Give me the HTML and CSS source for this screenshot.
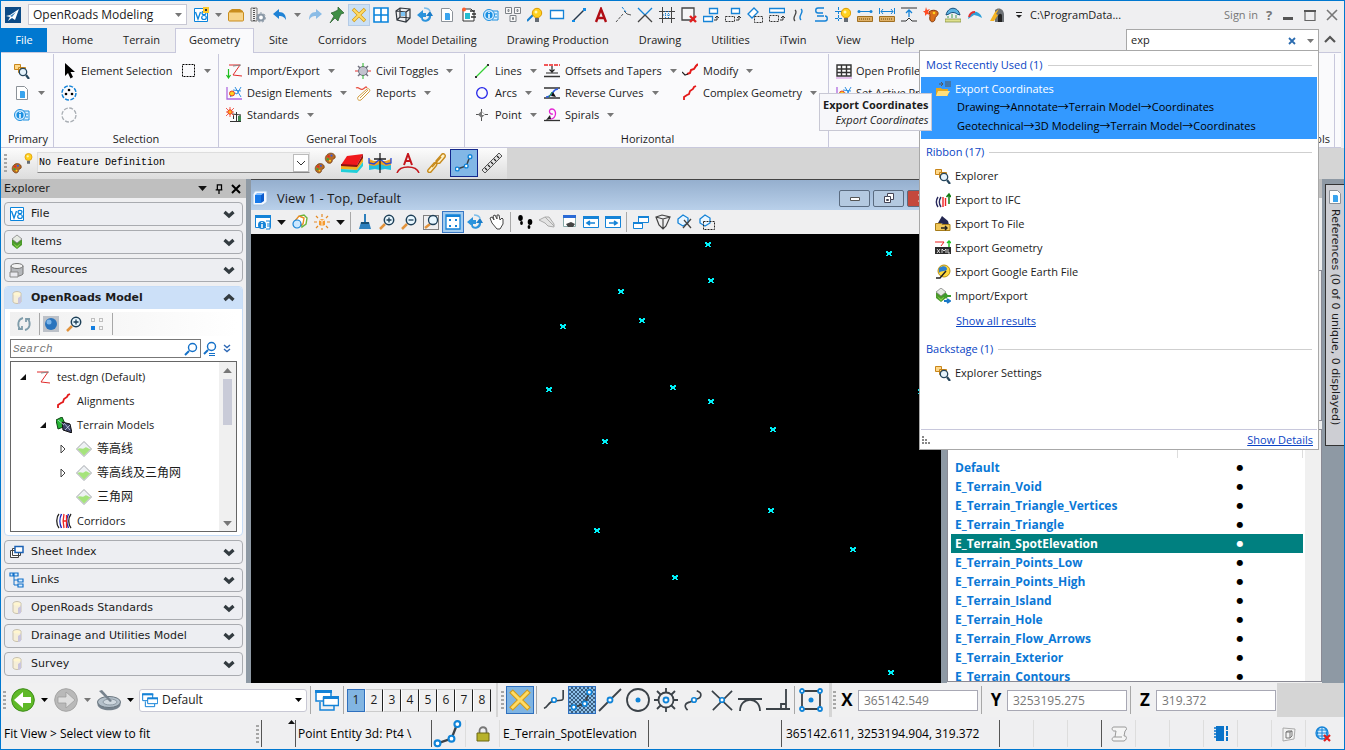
FILE: index.html
```html
<!DOCTYPE html>
<html lang="en">
  <head>
    <meta charset="UTF-8" />
    <meta name="viewport" content="width=device-width, initial-scale=1.0" />
    <title>OpenRoads Modeling</title>
    <link rel="stylesheet" href="styles.css">
  </head>
  <body>
    <!-- icon sprite -->
    <svg class="sprite" aria-hidden="true">
      <symbol id="caret" viewBox="0 0 7 4"><path d="M0 0h7L3.5 4z" fill="currentColor"/></symbol>
      <symbol id="logo" viewBox="0 0 16 16"><rect width="16" height="16" fill="#0c4a86"/><path d="M1 9l4-1 9-6-4 11-3-2-4 3 2-4z" fill="#fff"/><path d="M5 9l6-4-4 5z" fill="#3d83bd"/></symbol>
      <symbol id="v8" viewBox="0 0 16 16"><path d="M1.5 1.5h13v13h-13z" fill="#fff" stroke="#0a84dc"/><path d="M2.5 5L5 12l2.5-7" fill="none" stroke="#0a84dc" stroke-width="1.3"/><ellipse cx="11" cy="6" rx="2" ry="1.7" fill="none" stroke="#0a84dc" stroke-width="1.2"/><ellipse cx="11" cy="10.5" rx="2.3" ry="2" fill="none" stroke="#0a84dc" stroke-width="1.2"/></symbol>
      <symbol id="v8-star" viewBox="0 0 16 16"><use href="#v8"/><path d="M10 0h6v6h-6z" fill="#ffc928"/><path d="M12 2h2v2h-2z" fill="#333"/></symbol>
      <symbol id="folder" viewBox="0 0 16 16"><path d="M1 4l3-2h8l3 2v9H1z" fill="#c98d1e"/><rect x=".5" y="5" width="15" height="9" rx="1" fill="#f7d48a" stroke="#c98d1e"/></symbol>
      <symbol id="zip-gear" viewBox="0 0 16 16"><path d="M1 1h6v13H1z" fill="#eee" stroke="#777"/><path d="M4 1v13" stroke="#555" stroke-width="2" stroke-dasharray="1 1"/><circle cx="11" cy="10.5" r="3" fill="#fff" stroke="#8a98a6" stroke-width="2.2"/><circle cx="11" cy="10.5" r="4.6" fill="none" stroke="#8a98a6" stroke-dasharray="2 2"/></symbol>
      <symbol id="undo" viewBox="0 0 16 16"><path d="M1 7l6-5v3c5 0 7 3 7 8-2-3-3-4-7-4v3z" fill="#1f83d6"/></symbol>
      <symbol id="redo" viewBox="0 0 16 16"><path d="M15 7L9 2v3c-5 0-7 3-7 8 2-3 3-4 7-4v3z" fill="#8bbce6"/></symbol>
      <symbol id="pin" viewBox="0 0 16 16"><path d="M9 0l6 6-3 1-2 4-1 3-3-3-5 5 4-7-3-3 3-1 4-2z" fill="#3f8f45" stroke="#28602c" stroke-width=".7"/></symbol>
      <symbol id="cross-y" viewBox="0 0 16 16"><path d="M2 2l12 12M14 2L2 14" stroke="#d39b17" stroke-width="3.4"/><path d="M2.5 2.5l11 11M13.5 2.5l-11 11" stroke="#ffdb65" stroke-width="2"/></symbol>
      <symbol id="grid4" viewBox="0 0 16 16"><path d="M1 1h14v14H1zM1 8h14M8 1v14" fill="#fff" stroke="#0a84dc" stroke-width="1.6"/></symbol>
      <symbol id="cube" viewBox="0 0 16 16"><path d="M1 4l4-3 10 1v9l-4 4-9-2zM1 4l10 1v10M11 5l4-3M5 1v9l10 1M5 10l-3 3" fill="none" stroke="#30363d" stroke-width="1.2"/><path d="M6 5h4v4H6z" fill="#7dc4f5"/></symbol>
      <symbol id="rotate" viewBox="0 0 16 16"><path d="M0 8l6-5v3h3v4H6v3z" fill="#2b93dc"/><path d="M5 12c2 3 8 2 8-3" fill="none" stroke="#2b93dc" stroke-width="2.2"/><path d="M9 9l4-5 3 5z" fill="#1b7cc8"/><path d="M7 1c3 0 5 1 6 3" fill="none" stroke="#7bbdeb" stroke-width="1.6"/></symbol>
      <symbol id="page" viewBox="0 0 16 16"><path d="M2.5 1.5h8l3 3v10h-11z" fill="#fff" stroke="#8c9299"/><path d="M6 6h4l1 1v6H6z" fill="#3aa4ee"/></symbol>
      <symbol id="page-ref" viewBox="0 0 16 16"><path d="M2 2h8l3 3v9H2z" fill="#fff" stroke="#333"/><path d="M4 6h5v6H4z" fill="#23bcd0"/><path d="M9 4h5M11 7h4M10 10h5" stroke="#333" stroke-width="1.5"/><circle cx="3" cy="2.5" r="2" fill="#ff5f2e"/></symbol>
      <symbol id="info" viewBox="0 0 16 16"><path d="M9 4h6v9H9M12 7h2M12 10h2" fill="#dff1ff" stroke="#1b8fe0"/><circle cx="6" cy="8" r="5.5" fill="#cfeaff" stroke="#1b8fe0"/><circle cx="6" cy="8" r="3.6" fill="#1b8fe0"/><path d="M6 5v1M6 7v4" stroke="#fff" stroke-width="1.5"/></symbol>
      <symbol id="keys" viewBox="0 0 16 16"><path d="M.5.5h6v6h-6zM9.5.5h6v6h-6zM5 8.5h6v6H5zM3 2.5h1v2H3zM12 2.5h1v2h-1zM7.5 10.5h1v2h-1z" fill="#f8f8f8" stroke="#7d8288"/></symbol>
      <symbol id="bulb" viewBox="0 0 16 16"><circle cx="10" cy="6" r="4.7" fill="#ffd11f" stroke="#dd9a00"/><path d="M8 11h4v4H8z" fill="#646b73"/><circle cx="9" cy="5" r="1.5" fill="#fff6b5"/></symbol>
      <symbol id="bulb-line" viewBox="0 0 16 16"><path d="M0 14l7-7" stroke="#167fcd" stroke-width="2"/><use href="#bulb"/></symbol>
      <symbol id="rect" viewBox="0 0 16 16"><path d="M1.5 3.5h13v8h-13z" fill="#fff" stroke="#1583d7" stroke-width="1.3"/></symbol>
      <symbol id="line" viewBox="0 0 16 16"><path d="M2 14L14 2" stroke="#26394d" stroke-width="1.4"/><path d="M1 13h3v2H1zM12 1h3v3h-3z" fill="#138ce5"/></symbol>
      <symbol id="big-a" viewBox="0 0 16 16"><path d="M3 15L8 2l5 13M4.5 11h7" fill="none" stroke="#b00d14" stroke-width="2.4"/></symbol>
      <symbol id="extend" viewBox="0 0 16 16"><path d="M1 15l7-8" stroke="#555" stroke-dasharray="3 1"/><path d="M7 0l4 5" stroke="#1583d7" stroke-dasharray="3 1"/><path d="M9 4l3 3 4 1" fill="none" stroke="#555"/></symbol>
      <symbol id="trim" viewBox="0 0 16 16"><path d="M1 1l7 7 7-7" fill="none" stroke="#1583d7" stroke-width="1.3"/><path d="M1 15l7-7 7 7" fill="none" stroke="#444" stroke-width="1.3"/></symbol>
      <symbol id="fence" viewBox="0 0 16 16"><path d="M3.5 0v16M12.5 0v16M0 4.5h16M0 11.5h16" stroke="#444"/><path d="M6.5 4v8M9.5 4v8M4 8h8" stroke="#1583d7" stroke-dasharray="1 1"/></symbol>
      <symbol id="del" viewBox="0 0 16 16"><path d="M1 1h12v12H1z" fill="#f6f6f6" stroke="#444" stroke-width="1.3"/><path d="M9 9l6 6M15 9l-6 6" stroke="#e01f1f" stroke-width="2.4"/></symbol>
      <symbol id="copy" viewBox="0 0 16 16"><path d="M6.5 1.5h8v5h-8zM.5 9.5h9v5h-9z" fill="#fff" stroke="#1583d7" stroke-width="1.3"/><path d="M11 13h3V9m-2 2l2-2 2 2" fill="none" stroke="#333"/></symbol>
      <symbol id="move" viewBox="0 0 16 16"><path d="M6.5 1.5h8v5h-8z" fill="#fff" stroke="#1583d7" stroke-width="1.3"/><path d="M.5 9.5h9v5h-9z" fill="none" stroke="#333" stroke-dasharray="2 1"/><path d="M11 13h3V9m-2 2l2-2 2 2" fill="none" stroke="#333"/></symbol>
      <symbol id="turn" viewBox="0 0 16 16"><path d="M1 7l6-6 4 4-6 6z" fill="#fff" stroke="#1583d7" stroke-width="1.3"/><path d="M7.5 9.5h8v6h-8z" fill="none" stroke="#333" stroke-dasharray="2 1"/></symbol>
      <symbol id="scale" viewBox="0 0 16 16"><path d="M.5 1.5h15v4H.5z" fill="#fff" stroke="#1583d7" stroke-width="1.3"/><path d="M.5 8.5h9v6h-9z" fill="none" stroke="#333" stroke-dasharray="2 1"/><path d="M11 13h3V9m-2 2l2-2 2 2" fill="none" stroke="#333"/></symbol>
      <symbol id="waves" viewBox="0 0 16 16"><path d="M4 3c4 3-4 7 0 11" fill="none" stroke="#444" stroke-width="1.3"/><path d="M10 2c4 3-4 7 0 11" fill="none" stroke="#1583d7" stroke-width="1.4"/></symbol>
      <symbol id="ess" viewBox="0 0 16 16"><path d="M11 1H5c-3 0-3 5 0 5h5M4 9h7M2 14h10c3 0 3-5 0-5" fill="none" stroke="#1583d7" stroke-width="1.4"/></symbol>
      <symbol id="hash-bulb" viewBox="0 0 16 16"><path d="M3.5 0v14M0 4.5h8M0 11.5h8" stroke="#1583d7" stroke-dasharray="3 1"/><use href="#bulb" x="1"/></symbol>
      <symbol id="ruler-a" viewBox="0 0 16 16"><path d="M2 4.5h12" stroke="#1583d7"/><circle cx="2" cy="4.5" r="1.5" fill="#1583d7"/><circle cx="14" cy="4.5" r="1.5" fill="#1583d7"/><path d="M.5 9.5h15v5H.5z" fill="#dfb066" stroke="#a06f20"/><path d="M2 12h12" stroke="#6b480f" stroke-dasharray="1 1"/></symbol>
      <symbol id="ruler-b" viewBox="0 0 16 16"><path d="M.5 1v6M15.5 1v6M2 4.5h12M4 2L2 4.5 4 7M12 2l2 2.5L12 7" fill="none" stroke="#1583d7"/><path d="M.5 9.5h15v5H.5z" fill="#dfb066" stroke="#a06f20"/><path d="M2 12h12" stroke="#6b480f" stroke-dasharray="1 1"/></symbol>
      <symbol id="height" viewBox="0 0 16 16"><path d="M0 1h16M0 14h5l3-3 3 3h5" fill="none" stroke="#333"/><path d="M8 10V3M5 6l3-3 3 3" fill="none" stroke="#1583d7" stroke-width="1.3"/></symbol>
      <symbol id="palette" viewBox="0 0 16 16"><path d="M4 3c4-4 11-2 11 3 0 3-4 2-4 5s-4 5-7 2-3-7 0-10z" fill="#b86a24" stroke="#6d3a10"/><circle cx="6" cy="5" r="1.5" fill="#e22"/><circle cx="10" cy="4" r="1.5" fill="#2c5cf0"/><circle cx="5" cy="9" r="1.5" fill="#22b13a"/><circle cx="8" cy="11" r="1.3" fill="#ffd21f"/></symbol>
      <symbol id="palette-star" viewBox="0 0 16 16"><path d="M6 5c3-3 10-2 9 2 0 2-3 2-3 5s-4 4-5 1 1-4-1-8z" fill="#d9701d" stroke="#8a3d0a"/><circle cx="11" cy="6" r="1.3" fill="#ffd21f"/><path d="M3 0l1 3 3-1-2 3 2 3-3-1-2 2V6L0 4h2z" fill="#ff4c25"/></symbol>
      <symbol id="arch" viewBox="0 0 16 16"><path d="M1 8C3-1 13-1 15 8l-3-1c-2-2-6-2-8 0z" fill="#5db3e2" stroke="#17517f"/><path d="M0 12h16v3H0z" fill="#dfe08d" stroke="#7b8a3d" stroke-width=".7"/><path d="M3 9v2M7 7v4M11 8v3" stroke="#3e9c50"/></symbol>
      <symbol id="arch-sm" viewBox="0 0 16 16"><path d="M1 12C3 2 13 3 15 11l-4-2-4-1z" fill="#2f9fd8"/><path d="M2 10c1-4 4-5 6-5" fill="none" stroke="#e03131" stroke-width="2"/></symbol>
      <symbol id="tunnel" viewBox="0 0 16 16"><path d="M6 15V3c3-3 9-2 9 5v7z" fill="#6d7175"/><path d="M1 14l5-9 4-3-3 5 2 1-4 6z" fill="#f4b322"/><path d="M9 15V9c1-3 4-3 4 0v6z" fill="#222"/></symbol>

      <symbol id="explorer" viewBox="0 0 16 16"><path d="M.5 1.5h6v5h-6zM4.5 4.5h7v5h-7z" fill="#ffd88a" stroke="#c9861a"/><circle cx="9" cy="9" r="3.7" fill="#e6f3fc" stroke="#27475e" stroke-width="1.3"/><path d="M12 12l3 4" stroke="#27475e" stroke-width="2.2"/></symbol>
      <symbol id="cursor" viewBox="0 0 16 16"><path d="M4 0v13l3-3 2.5 5.5L12 14l-2.5-5H14z" fill="#000"/></symbol>
      <symbol id="sel-box" viewBox="0 0 16 16"><path d="M1.5 1.5h12v12h-12z" fill="none" stroke="#000" stroke-dasharray="2 1"/></symbol>
      <symbol id="sel-dots" viewBox="0 0 16 16"><circle cx="8" cy="8" r="7" fill="none" stroke="#1583d7" stroke-width="1.5" stroke-dasharray="4 1.5"/><circle cx="8" cy="5" r="1.3"/><circle cx="5" cy="9" r="1.3"/><circle cx="11" cy="9" r="1.3"/></symbol>
      <symbol id="sel-none" viewBox="0 0 16 16"><circle cx="8" cy="8" r="7" fill="none" stroke="#a9aeb4" stroke-width="1.3" stroke-dasharray="4 1.5"/></symbol>
      <symbol id="zed" viewBox="0 0 16 16"><path d="M1 3h11L5 13l9 1" fill="none" stroke="#e02b2b"/><path d="M5 4l8-1" stroke="#888"/></symbol>
      <symbol id="imp" viewBox="0 0 16 16"><use href="#zed" x="2" y="-1"/><path d="M2.5 6v9M.5 12l2 3 2-3" fill="none" stroke="#1fbf1f" stroke-width="1.2"/></symbol>
      <symbol id="design" viewBox="0 0 16 16"><path d="M1 2v12h15" fill="none" stroke="#b06adf" stroke-width="1.3"/><path d="M4 12l5-4 2 1 4-7M9 2l6 10M7 5l8 1" fill="none" stroke="#2e8fe0"/><circle cx="6" cy="8.5" r="2.5" fill="#ffd21f" stroke="#e0402b"/></symbol>
      <symbol id="std" viewBox="0 0 16 16"><path d="M4 14.5h11M10.5 5v9M6 7l9 1M7.5 8v4M14 8v4" fill="none" stroke="#333"/><path d="M0 1l8 8M8 1L0 9M4 0v10M0 5h8" stroke="#f03824" stroke-width=".8"/><circle cx="4" cy="5" r="2.2" fill="#ffb21f" stroke="#f03824"/><path d="M12 9h3v5h-3z" fill="#3f8a50"/></symbol>
      <symbol id="toggles" viewBox="0 0 16 16"><circle cx="8" cy="8" r="4.5" fill="#c3c3cf" stroke="#71717f"/><path d="M3 3l2 2M13 3l-2 2M3 13l2-2M13 13l-2-2" stroke="#71717f" stroke-width="1.5"/><path d="M8 0v4M8 12v4" stroke="#28b428"/><path d="M0 8h3M13 8h3" stroke="#e03131"/></symbol>
      <symbol id="reports" viewBox="0 0 16 16"><path d="M1 3c3-2 4 3 7 1s3-3 4-1" fill="none" stroke="#e84b3c" stroke-width="1.2"/><path d="M3 12l9-8c2-1 4 1 2 3l-8 8c-3 1-4-1-3-3zM5 13l8-8" fill="#fff" stroke="#d09a3a"/></symbol>
      <symbol id="lines" viewBox="0 0 16 16"><path d="M2 14L14 2" stroke="#35d035" stroke-width="1.3"/><path d="M1 13h2v2H1zM13 1h2v2h-2z" fill="#333"/></symbol>
      <symbol id="arcs" viewBox="0 0 16 16"><circle cx="8" cy="8" r="5.3" fill="none" stroke="#2424e8" stroke-width="1.3"/></symbol>
      <symbol id="point" viewBox="0 0 16 16"><path d="M7.5 2v12M2 7.5h12" stroke="#555"/><path d="M7.5 4L11 7.5 7.5 11 4 7.5z" fill="#777"/><path d="M8 5v3h3z" fill="#fff"/></symbol>
      <symbol id="offsets" viewBox="0 0 16 16"><path d="M0 2h16" stroke="#e22" stroke-width="1.5" stroke-dasharray="4 1"/><path d="M8 3v6M5.5 6.5L8 9l2.5-2.5M2 10h12" fill="none" stroke="#222" stroke-width="1.2"/><path d="M0 13.5h16" stroke="#333" stroke-width="1.5"/></symbol>
      <symbol id="reverse" viewBox="0 0 16 16"><path d="M0 3h16M0 13h16" stroke="#333" stroke-width="1.4"/><path d="M2 12c7 0 6-8 12-8" fill="none" stroke="#2b5be8" stroke-width="1.4"/><path d="M5 12l3-5" fill="none" stroke="#20a030"/><path d="M9 7l3 5-5-1z" fill="#111"/></symbol>
      <symbol id="spirals" viewBox="0 0 16 16"><path d="M0 13.5h16" stroke="#333" stroke-width="1.3"/><path d="M6 12c7 0 7-10 2-10-4 0-3 6 1 5" fill="none" stroke="#e324d4" stroke-width="1.3"/><path d="M2 13l4-5 1 4z" fill="#222"/></symbol>
      <symbol id="modify" viewBox="0 0 16 16"><path d="M5 11l3-1 1-3 3-1 2-3 2-2" fill="none" stroke="#e31919" stroke-width="2"/><path d="M0 9l3 3 3-1" fill="none" stroke="#222" stroke-width="1.2"/></symbol>
      <symbol id="complex" viewBox="0 0 16 16"><path d="M2 15v-3l3-2 2-1 1-3 3-2 1-2 2-1" fill="none" stroke="#e31919" stroke-width="1.8"/></symbol>
      <symbol id="profile" viewBox="0 0 16 16"><path d="M1 2h14v11H1zM1 6h14M1 9.5h14M5.5 2v11M10.5 2v11" fill="#fff" stroke="#333" stroke-width="1.4"/><path d="M0 15h16" stroke="#d38be0"/></symbol>
      <symbol id="min" viewBox="0 0 16 16"><path d="M3 11.5h10" stroke="#555" stroke-width="3"/></symbol>
      <symbol id="max" viewBox="0 0 16 16"><path d="M3 4.5h10v9H3z" fill="none" stroke="#666" stroke-width="1.2"/><path d="M2 4h12" stroke="#555" stroke-width="2"/></symbol>
      <symbol id="close" viewBox="0 0 16 16"><path d="M3 3l10 10M13 3L3 13" stroke="currentColor" stroke-width="1.6"/></symbol>
      <symbol id="close-b" viewBox="0 0 10 10"><path d="M2 2l6 6M8 2L2 8" stroke="currentColor" stroke-width="1.8"/></symbol>
      <symbol id="up" viewBox="0 0 16 16"><path d="M3 10l5-5 5 5" fill="none" stroke="currentColor" stroke-width="2.2"/></symbol>
      <symbol id="down" viewBox="0 0 16 16"><path d="M3.5 6L8 10l4.5-4" fill="none" stroke="#333b40" stroke-width="3.2"/></symbol>
      <symbol id="up-s" viewBox="0 0 16 16"><path d="M3.5 10L8 6l4.5 4" fill="none" stroke="#333b40" stroke-width="3.2"/></symbol>

      <symbol id="strata" viewBox="0 0 24 20"><path d="M1 12L7 3l16-2-6 11z" fill="#f0191c"/><path d="M1 11l16 1 6-11v5l-6 9-16-1z" fill="#8b1212"/><path d="M1 13l16 1 6-9v4l-6 8-16-1z" fill="#f2b020"/><path d="M1 16l16 1 6-8v4l-6 7-16-1z" fill="#21cfd8"/></symbol>
      <symbol id="section" viewBox="0 0 24 20"><path d="M1 6l5 2h12l5-2v8l-5-1-6 1-6-1-5 1z" fill="#f2a01f"/><path d="M1 12l5 1 6-2 6 2 5-1v5l-6-1-5 1-5-1-6 1z" fill="#22bfe0"/><path d="M1 5v5l5 1 6-5 6 5 5-1V5" fill="none" stroke="#2546d8" stroke-width="1.3"/><path d="M12 0v20M6 6h12" stroke="#222" stroke-width="1.3"/></symbol>
      <symbol id="arc-a" viewBox="0 0 24 20"><path d="M8 12l4-11 4 11M9 8h6" fill="none" stroke="#c4161c" stroke-width="2"/><path d="M1 20c3-8 19-8 22 0" fill="none" stroke="#c4161c" stroke-width="1.5"/></symbol>
      <symbol id="chain" viewBox="0 0 24 20"><path d="M12 8l6-7c2-1 4 1 3 3l-5 6c-2 1-4 0-4-2zM4 17l6-7c2-1 4 1 2 3l-5 6c-2 1-4 0-3-2z" fill="#fff1c4" stroke="#c78a1c" stroke-width="1.4"/><path d="M8 14l9-10" stroke="#c78a1c" stroke-width="1.5"/></symbol>
      <symbol id="poly" viewBox="0 0 24 24"><path d="M3 20l12-4 5-13" fill="none" stroke="#3b4248" stroke-width="2"/><circle cx="3" cy="20" r="2.5" fill="#fff" stroke="#1084d8" stroke-width="1.8"/><circle cx="15" cy="16" r="2.5" fill="#fff" stroke="#1084d8" stroke-width="1.8"/><circle cx="20" cy="3.5" r="2.5" fill="#fff" stroke="#1084d8" stroke-width="1.8"/></symbol>
      <symbol id="ruler" viewBox="0 0 24 24"><path d="M2 19L19 2l3 3L5 22z" fill="#e4e4e4" stroke="#555"/><path d="M5 17l2 2M8 14l2 2M11 11l2 2M14 8l2 2M17 5l2 2" stroke="#222" stroke-width="1.2"/></symbol>

      <symbol id="gem" viewBox="0 0 16 16"><path d="M8 2l5 4v5l-5 4-5-4V6z" fill="#4b9a2a"/><path d="M8 1l5 4-5 4-5-4z" fill="#e6eae3" stroke="#777" stroke-width=".7"/><path d="M4 9l4 3 4-3-4 5z" fill="#8ad44c"/></symbol>
      <symbol id="db" viewBox="0 0 16 16"><path d="M2 4v8c2 3 9 3 12 0V4z" fill="#b6b8bc" stroke="#777"/><ellipse cx="8" cy="4" rx="6" ry="2.5" fill="#f2f2f2" stroke="#777"/><path d="M1 10h8v5H1z" fill="#e9e9ef" stroke="#888"/></symbol>
      <symbol id="can" viewBox="0 0 16 16"><path d="M4 3c2-2 6-2 8 0v9c-2 2-6 2-8 0z" fill="#f6efd8" stroke="#c9c2ae"/><path d="M9 8l3-2v7l-3 1z" fill="#c9c5de"/><ellipse cx="8" cy="4" rx="3.5" ry="1.5" fill="#fff6cf"/></symbol>
      <symbol id="sheets" viewBox="0 0 16 16"><path d="M1.5 6.5h8v7h-8zM3.5 4.5h8v7h-8z" fill="#fff" stroke="#444"/><path d="M6 2.5h8v6H6z" fill="#fff" stroke="#1b62b5" stroke-width="1.5"/></symbol>
      <symbol id="links" viewBox="0 0 16 16"><path d="M1 1h3v3H1zM5 1h4v3H5zM9 7h5v3H9zM9 12h5v3H9z" fill="#dbeeff" stroke="#1370c8" stroke-width="1.2"/><path d="M5 4v9h4M5 8h4" fill="none" stroke="#1370c8"/></symbol>
      <symbol id="refresh" viewBox="0 0 16 16"><path d="M7 2C2 3 1 9 4 13M2 13h4v-3M9 14c5-1 6-7 3-11M14 3h-4v3" fill="none" stroke="#7f9caa" stroke-width="1.8"/></symbol>
      <symbol id="globe-box" viewBox="0 0 16 16"><path d="M0 0h16v16H0z" fill="#bcc1c8"/><circle cx="8" cy="8" r="6" fill="#2a74bd"/><circle cx="6" cy="6" r="2.5" fill="#7cb6ea"/></symbol>
      <symbol id="zoom-in" viewBox="0 0 16 16"><path d="M1 15l5-5" stroke="#e2933c" stroke-width="2.5"/><circle cx="10" cy="6" r="4.7" fill="#e8f7ff" stroke="#1d3f57" stroke-width="1.5"/><path d="M7.5 6h5M10 3.5v5" stroke="#1d3f57" stroke-width="1.3"/></symbol>
      <symbol id="zoom-out" viewBox="0 0 16 16"><path d="M1 15l5-5" stroke="#e2933c" stroke-width="2.5"/><circle cx="10" cy="6" r="4.7" fill="#e8f7ff" stroke="#1d3f57" stroke-width="1.5"/><path d="M7.5 6h5" stroke="#1d3f57" stroke-width="1.3"/></symbol>
      <symbol id="zoom-win" viewBox="0 0 16 16"><path d="M.5 1.5h15v14H.5z" fill="none" stroke="#111" stroke-dasharray="1 1"/><path d="M2 14l5-4" stroke="#e2933c" stroke-width="2.5"/><circle cx="10" cy="6" r="4.5" fill="#e8f7ff" stroke="#1d3f57" stroke-width="1.3"/></symbol>
      <symbol id="squares" viewBox="0 0 16 16"><path d="M2.5 2.5h3v3h-3zM10.5 2.5h3v3h-3zM10.5 10.5h3v3h-3z" fill="none" stroke="#888" stroke-dasharray="1 1"/><path d="M2 10h4v4H2z" fill="#117de0"/></symbol>
      <symbol id="find" viewBox="0 0 16 16"><path d="M2 14l4-4" stroke="#1370c8" stroke-width="2"/><circle cx="9.5" cy="6.5" r="4" fill="#fff" stroke="#1370c8" stroke-width="1.4"/></symbol>
      <symbol id="find-eq" viewBox="0 0 16 16"><use href="#find" y="-1"/><path d="M7 12.5h6M7 14.5h6" stroke="#1370c8"/></symbol>
      <symbol id="chevs" viewBox="0 0 16 16"><path d="M5 4l3 2.5L11 4M5 8l3 2.5L11 8" fill="none" stroke="#2d68b5" stroke-width="1.4"/></symbol>
      <symbol id="terrain" viewBox="0 0 16 16"><path d="M0 3l6-3 4 9-8 3z" fill="#25b534" stroke="#0d4213"/><path d="M6 5l8 2 2 9-9-3z" fill="#3e4468" stroke="#111"/><path d="M2 3l6 5M8 6l6 7M14 8l-5 5" stroke="#dfe6ff" stroke-width=".7"/></symbol>
      <symbol id="diamond" viewBox="0 0 16 16"><path d="M8 .5L15.5 8 8 15.5.5 8z" fill="#eef1f4" stroke="#8d9298" stroke-width=".8"/><path d="M1.5 8c3-2 5 1 7-1s3 1 6 1L8 14.5z" fill="#a5e37c"/></symbol>
      <symbol id="corridor" viewBox="0 0 16 16"><path d="M3 1C0 4 0 11 3 15M15 1c-3 4-3 10 0 14" fill="none" stroke="#222" stroke-width="1.3"/><path d="M5.5 1c-2 4-2 10 0 14M12.5 1c-2 4-2 10 0 14" fill="none" stroke="#1c22b8" stroke-width="1.4"/><path d="M8 1c-1 4-1 10 0 14M10.5 2v13M7 8h4" fill="none" stroke="#e22" stroke-width="1.3"/></symbol>
      <symbol id="tw-open" viewBox="0 0 16 16"><path d="M11 5v6H5z" fill="#111"/></symbol>
      <symbol id="tw" viewBox="0 0 16 16"><path d="M6 4l4 4-4 4z" fill="#fff" stroke="#444"/></symbol>

      <symbol id="v-cube" viewBox="0 0 16 16"><path d="M3 1h12v11l-4 3H1V4z" fill="#f3f8ff" stroke="#a7c4e0"/><path d="M3 5h6v8H3z" fill="#1679ea"/><path d="M3 5l2-2h7L9 5z" fill="#84beff"/><path d="M9 5l3-2v8l-3 2z" fill="#0d5ccc"/></symbol>
      <symbol id="v-info" viewBox="0 0 16 16"><path d="M.5 1.5h15v12H.5z" fill="#fff" stroke="#1583d7"/><path d="M0 1h16v3H0z" fill="#1583d7"/><circle cx="7" cy="11" r="4" fill="#1583d7"/><path d="M7 8v1M7 10v4" stroke="#fff" stroke-width="1.5"/><path d="M11 7h4v8h-4M12 10h3M12 12h3" fill="#fff" stroke="#1583d7"/></symbol>
      <symbol id="style" viewBox="0 0 16 16"><path d="M8 2l4-1 3 3-1 6-4 3z" fill="#fff" stroke="#6bb33c" stroke-width="1.4"/><path d="M3 7l4-5 5 2-1 6-5 2z" fill="#fff" stroke="#e88c22" stroke-width="1.4"/><circle cx="5" cy="10" r="4" fill="#cce8ff" stroke="#1583d7" stroke-width="1.2"/></symbol>
      <symbol id="sun" viewBox="0 0 16 16"><path d="M5 6l3-1 3 1v5l-3 1-3-1z" fill="#f59a2d"/><path d="M5 6l3 1 3-1M8 7v5" fill="none" stroke="#fff" stroke-width=".8"/><path d="M8 0v3M8 14v2M0 8h3M13 8h3M2 2l2 2M14 2l-2 2M2 14l2-2M14 14l-2-2" stroke="#e58a24" stroke-width="1.2"/></symbol>
      <symbol id="brush" viewBox="0 0 16 16"><path d="M7 0h2v8h3l2 7H2l2-7h3z" fill="#2d80bd"/><path d="M4 9h8" stroke="#11405f" stroke-width="1.5"/></symbol>
      <symbol id="fit" viewBox="0 0 16 16"><path d="M1 1h14v14H1z" fill="#fff" stroke="#1583d7" stroke-width="1.3"/><path d="M1 1h14v2H1z" fill="#1583d7"/><path d="M4 5h2v2H4zM10 5h2v2h-2zM4 11h2v2H4zM10 11h2v2h-2z" fill="#1583d7"/></symbol>
      <symbol id="hand" viewBox="0 0 16 16"><path d="M3 9L1 4l2-1 2 3-1-4 2-1 2 4V1h2l1 5 2-2 1 1v5l-3 5H8z" fill="#fff" stroke="#444"/></symbol>
      <symbol id="feet" viewBox="0 0 16 16"><ellipse cx="3.5" cy="4" rx="2.3" ry="3"/><ellipse cx="4.5" cy="9" rx="1.4" ry="2"/><ellipse cx="13" cy="8" rx="2.3" ry="3"/><ellipse cx="12" cy="13" rx="1.4" ry="2"/></symbol>
      <symbol id="plane" viewBox="0 0 16 16"><path d="M0 6l6-3h4l5 7v3l-6-1-3-3z" fill="#e3e3e3" stroke="#aaa"/><path d="M6 3l9 9" stroke="#aaa"/></symbol>
      <symbol id="cam" viewBox="0 0 16 16"><path d="M2.5 1.5h12v11h-12z" fill="#fff" stroke="#8aa"/><path d="M2 1h13v3H2z" fill="#2a6ad6"/><path d="M5 10l5-2 4 2-2 3H7z" fill="#444"/></symbol>
      <symbol id="prev" viewBox="0 0 16 16"><path d="M.5 2.5h15v11H.5z" fill="#fff" stroke="#1583d7"/><path d="M0 2h16v3H0z" fill="#1583d7"/><path d="M12 9H4M7 7L4 9l3 2" fill="none" stroke="#1583d7" stroke-width="1.6"/></symbol>
      <symbol id="next" viewBox="0 0 16 16"><path d="M.5 2.5h15v11H.5z" fill="#fff" stroke="#1583d7"/><path d="M0 2h16v3H0z" fill="#1583d7"/><path d="M4 9h8M9 7l3 2-3 2" fill="none" stroke="#1583d7" stroke-width="1.6"/></symbol>
      <symbol id="wins" viewBox="0 0 16 16"><path d="M5.5 2.5h10v6h-10zM.5 8.5h9v6h-9z" fill="#fff" stroke="#1583d7"/><path d="M5 2h11v2H5zM0 8h10v2H0z" fill="#1583d7"/></symbol>
      <symbol id="view-grp" viewBox="0 0 24 24"><path d="M1 3h15v10H1z" fill="#fff" stroke="#1583d7" stroke-width="1.5"/><path d="M0 2h17v3H0z" fill="#1583d7"/><path d="M5 14v8h14v-4" fill="none" stroke="#1583d7" stroke-width="1.5"/><path d="M8.5 9.5h15v8h-15z" fill="#fff" stroke="#1583d7" stroke-width="1.5"/><path d="M8 8h16v3H8z" fill="#1583d7"/></symbol>
      <symbol id="persp" viewBox="0 0 16 16"><path d="M1 3l6-2 8 2-4 9-3 3-4-4zM1 3l7 2 7-2M8 5v10" fill="none" stroke="#444" stroke-width="1.2"/></symbol>
      <symbol id="clip" viewBox="0 0 16 16"><path d="M1 5l5-4 5 3v5l-5 3-5-3z" fill="#eaf6ff" stroke="#1583d7" stroke-width="1.3"/><path d="M7 6l7 8M14 5l-8 9" stroke="#444" stroke-width="1.3"/></symbol>
      <symbol id="clip-m" viewBox="0 0 16 16"><path d="M1 5l5-4 5 3v5l-5 3-5-3z" fill="#eaf6ff" stroke="#1583d7" stroke-width="1.3"/><path d="M4.5 7.5h11v8h-11z" fill="none" stroke="#222" stroke-dasharray="2 1"/></symbol>

      <symbol id="exp-coord" viewBox="0 0 16 16"><path d="M1 7h5l1 1h6v7H1z" fill="#e5a81f"/><path d="M3 10h12l-3 5H1z" fill="#ffdf7d"/><path d="M4 3h4M6 1l2 2-2 2M10 1h6M10 3h6M10 5h6" fill="none" stroke="#555"/></symbol>
      <symbol id="exp-ifc" viewBox="0 0 16 16"><path d="M3 5c-2 3-2 7 0 10M6 5c-2 3-2 7 0 10" fill="none" stroke="#2a2a5e" stroke-width="1.4"/><path d="M8 5v10M10.5 6v8" stroke="#e22" stroke-width="1.4"/><path d="M14 12V2M11.5 5L14 2l2 3" fill="none" stroke="#117a11" stroke-width="1.5"/></symbol>
      <symbol id="exp-file" viewBox="0 0 16 16"><path d="M3 7l4-7 6 5 1 4z" fill="#23264f"/><path d="M.5 7.5H6l1 1h8v6H.5z" fill="#f1c75a" stroke="#a67c1a"/><path d="M6 12h6M10 10l2 2-2 2" fill="none" stroke="#222" stroke-width="1.4"/></symbol>
      <symbol id="exp-xml" viewBox="0 0 16 16"><path d="M0 2h9L6 6" fill="none" stroke="#e22"/><path d="M14 8V1M12 3l2-2 2 2" fill="none" stroke="#1fc41f" stroke-width="1.4"/><path d="M0 7h16v7H0z" fill="#2b2b2b"/><path d="M2 9l3 4M5 9l-3 4M7 13V9l2 2 2-2v4M13 9v4h2" fill="none" stroke="#fff" stroke-width=".8"/></symbol>
      <symbol id="exp-earth" viewBox="0 0 16 16"><circle cx="9" cy="7" r="6" fill="#ffda3d" stroke="#b78f15"/><path d="M4 4c4-3 8-2 8 1s-6 1-8 4z" fill="#2c80d0"/><path d="M1 14h4l6-7" fill="none" stroke="#222" stroke-width="1.5"/></symbol>
      <symbol id="imp-exp" viewBox="0 0 16 16"><use href="#gem" x="-2" y="-1"/><path d="M16 8H9M12 6L9 8l3 2" fill="none" stroke="#3c9c2c" stroke-width="2"/><path d="M9 13h6M12 11l3 2-3 2" fill="none" stroke="#1b78c8" stroke-width="2"/></symbol>

      <symbol id="back" viewBox="0 0 24 24"><circle cx="12" cy="12" r="11.3" fill="#5fb928" stroke="#3c8c17"/><path d="M3 12l9-8v5h8v6h-8v5z" fill="#fff"/></symbol>
      <symbol id="fwd" viewBox="0 0 24 24"><circle cx="12" cy="12" r="11.3" fill="#b9b9b9" stroke="#a4a4a4"/><path d="M21 12l-9-8v5H4v6h8v5z" fill="#dedede" stroke="#999" stroke-width=".7"/></symbol>
      <symbol id="disc" viewBox="0 0 24 24"><path d="M.5 14v3c2 7 21 7 23 0v-3z" fill="#76828d"/><ellipse cx="12" cy="14" rx="11.5" ry="5.5" fill="#b4c0ca" stroke="#69757f"/><ellipse cx="13" cy="14" rx="7" ry="3" fill="#cfd8df" stroke="#8d99a3"/><path d="M2 3l3-1 10 11-2 1z" fill="#76828d"/></symbol>
      <symbol id="dot" viewBox="0 0 24 24"><circle cx="12" cy="12" r="2.5" fill="#fff" stroke="#1084d8" stroke-width="1.8"/></symbol>
      <symbol id="sn-near" viewBox="0 0 24 24"><path d="M1 21c5-1 4-7 11-8s10 0 10-3V1" fill="none" stroke="#3b4248" stroke-width="1.8"/><use href="#dot"/></symbol>
      <symbol id="sn-mid" viewBox="0 0 24 24"><path d="M1 23L23 1" stroke="#3b4248" stroke-width="1.8"/><use href="#dot"/></symbol>
      <symbol id="sn-cen" viewBox="0 0 24 24"><circle cx="12" cy="12" r="11" fill="none" stroke="#3b4248" stroke-width="1.8"/><circle cx="12" cy="12" r="2.5" fill="#1084d8"/></symbol>
      <symbol id="sn-org" viewBox="0 0 24 24"><circle cx="12" cy="12" r="7.5" fill="none" stroke="#3b4248" stroke-width="1.8"/><path d="M12 0v5M12 19v5M0 12h5M19 12h5M3 3l4 4M17 17l4 4M21 3l-4 4M7 17l-4 4" stroke="#3b4248" stroke-width="1.8"/><use href="#dot"/></symbol>
      <symbol id="sn-bi" viewBox="0 0 24 24"><path d="M5 23c-5-5-2-8 3-9l7-3c6-2 6-7 0-9" fill="none" stroke="#3b4248" stroke-width="1.8"/><use href="#dot"/></symbol>
      <symbol id="sn-int" viewBox="0 0 24 24"><path d="M1 2l22 21M23 2L2 23" stroke="#3b4248" stroke-width="1.8"/><use href="#dot"/></symbol>
      <symbol id="sn-tan" viewBox="0 0 24 24"><path d="M0 11h24M2 23c0-15 20-15 20 0" fill="none" stroke="#3b4248" stroke-width="1.8"/></symbol>
      <symbol id="sn-perp" viewBox="0 0 24 24"><path d="M0 21h24M20 1v20M15 21v-5h5" fill="none" stroke="#3b4248" stroke-width="1.8"/></symbol>
      <symbol id="sn-multi" viewBox="0 0 24 24"><path d="M3 3h18v18H3z" fill="none" stroke="#3b4248" stroke-width="1.8"/><circle cx="12" cy="12" r="2.5" fill="#1084d8"/><g fill="#fff" stroke="#1084d8" stroke-width="1.8"><circle cx="3" cy="3" r="2"/><circle cx="21" cy="3" r="2"/><circle cx="3" cy="21" r="2"/><circle cx="21" cy="21" r="2"/></g></symbol>
      <symbol id="lock" viewBox="0 0 16 16"><path d="M4.5 8V5c0-5 7-5 7 0v3" fill="none" stroke="#777" stroke-width="1.8"/><path d="M2 7h12v8H2z" fill="#b7b22a" stroke="#6c6812"/></symbol>
      <symbol id="scroll" viewBox="0 0 16 16"><path d="M3 1h11c2 0 2 3 0 4l-1 5h1c2 0 2 4-1 5H3c-3 0-2-4 0-4h1l1-6H3C1 5 0 1 3 1zM4 11h7" fill="#f5f5f5" stroke="#999"/></symbol>
      <symbol id="book" viewBox="0 0 16 16"><path d="M3 0h8v15H3zM13 0h2v4h-2zM13 5h2v5h-2zM13 11h2v4h-2z" fill="#0a73c9"/><path d="M1 2h4M1 5h4M1 8h4M1 11h4" stroke="#0a73c9" stroke-width="1.3"/></symbol>
      <symbol id="prism" viewBox="0 0 16 16"><path d="M2 2l12 1-1 10-11 2z" fill="#f2f2f2" stroke="#aaa"/><path d="M5 6l2-1h4v5l-2 2H5zM5 6h4v6M9 6l2-1" fill="none" stroke="#777"/></symbol>
      <symbol id="net" viewBox="0 0 16 16"><circle cx="7" cy="7" r="6" fill="#d9f0ff" stroke="#1583d7" stroke-width="1.3"/><path d="M7 1v12M1 7h12M2 4h10M2 10h10M4 2c-2 3-2 7 0 10M10 2c2 3 2 7 0 10" fill="none" stroke="#1583d7"/><path d="M9 9l6 6M15 9l-6 6" stroke="#e01f1f" stroke-width="2.2"/></symbol>
      <symbol id="pt" viewBox="0 0 6 6"><path d="M0 0h2v1h2V0h2v2H5v2h1v1H4V4H2v1H0V4h1V2H0z" fill="#00f0f8"/></symbol>
    </svg>

    <div class="app">
      <header class="titlebar">
        <svg class="ic logo"><use href="#logo"/></svg>
        <label class="combo workflow">
          <select aria-label="Workflow"><option>OpenRoads Modeling</option></select>
          <svg class="caret"><use href="#caret"/></svg>
        </label>
        <div class="quick">
          <button title="V8"><svg class="ic"><use href="#v8-star"/></svg></button>
          <button class="thin" title="More"><svg class="caret"><use href="#caret"/></svg></button>
          <button title="Open"><svg class="ic"><use href="#folder"/></svg></button>
          <button title="Compress"><svg class="ic"><use href="#zip-gear"/></svg></button>
          <button title="Undo"><svg class="ic"><use href="#undo"/></svg></button>
          <button class="thin" title="Undo list"><svg class="caret"><use href="#caret"/></svg></button>
          <button title="Redo"><svg class="ic"><use href="#redo"/></svg></button>
          <button title="Pin"><svg class="ic"><use href="#pin"/></svg></button>
          <button class="on" title="AccuSnap"><svg class="ic"><use href="#cross-y"/></svg></button>
          <button title="Views"><svg class="ic"><use href="#grid4"/></svg></button>
          <button title="Model"><svg class="ic"><use href="#cube"/></svg></button>
          <button title="Rotate"><svg class="ic"><use href="#rotate"/></svg></button>
          <button title="Models"><svg class="ic"><use href="#page"/></svg></button>
          <button title="References"><svg class="ic"><use href="#page-ref"/></svg></button>
          <button title="Properties"><svg class="ic"><use href="#info"/></svg></button>
          <button title="Key-ins"><svg class="ic"><use href="#keys"/></svg></button>
          <button title="Display"><svg class="ic"><use href="#bulb-line"/></svg></button>
          <button title="Block"><svg class="ic"><use href="#rect"/></svg></button>
          <button title="Line"><svg class="ic"><use href="#line"/></svg></button>
          <button title="Text"><svg class="ic"><use href="#big-a"/></svg></button>
          <button title="Extend"><svg class="ic"><use href="#extend"/></svg></button>
          <button title="Trim"><svg class="ic"><use href="#trim"/></svg></button>
          <button title="Break"><svg class="ic"><use href="#fence"/></svg></button>
          <button title="Delete"><svg class="ic"><use href="#del"/></svg></button>
          <button title="Copy"><svg class="ic"><use href="#copy"/></svg></button>
          <button title="Move"><svg class="ic"><use href="#move"/></svg></button>
          <button title="Rotate element"><svg class="ic"><use href="#turn"/></svg></button>
          <button title="Scale"><svg class="ic"><use href="#scale"/></svg></button>
          <button title="Parallel"><svg class="ic"><use href="#waves"/></svg></button>
          <button title="Curve"><svg class="ic"><use href="#ess"/></svg></button>
          <button title="Level display"><svg class="ic"><use href="#hash-bulb"/></svg></button>
          <button title="Measure distance"><svg class="ic"><use href="#ruler-a"/></svg></button>
          <button title="Measure length"><svg class="ic"><use href="#ruler-b"/></svg></button>
          <button title="Measure height"><svg class="ic"><use href="#height"/></svg></button>
          <button title="Feature"><svg class="ic"><use href="#palette-star"/></svg></button>
          <button title="Terrain"><svg class="ic"><use href="#arch"/></svg></button>
          <button title="Corridor"><svg class="ic"><use href="#arch-sm"/></svg></button>
          <button title="Tunnel"><svg class="ic"><use href="#tunnel"/></svg></button>
          <button title="Customize"><svg class="ic-s" viewBox="0 0 10 10"><path d="M2 2.5h6" stroke="#222"/><path d="M2 5h6L5 8z" fill="#222"/></svg></button>
        </div>
        <span class="path">C:\ProgramData...</span>
        <div class="winctl">
          <button>Sign in</button>
          <button class="help" title="Help">?</button>
          <button title="Minimize"><svg class="ic"><use href="#min"/></svg></button>
          <button title="Maximize"><svg class="ic"><use href="#max"/></svg></button>
          <button title="Close"><svg class="ic"><use href="#close"/></svg></button>
        </div>
      </header>

      <nav class="tabs">
        <button class="file">File</button>
        <button>Home</button>
        <button>Terrain</button>
        <button class="active">Geometry</button>
        <button>Site</button>
        <button>Corridors</button>
        <button>Model Detailing</button>
        <button>Drawing Production</button>
        <button>Drawing</button>
        <button>Utilities</button>
        <button>iTwin</button>
        <button>View</button>
        <button>Help</button>
        <div class="search">
          <input type="text" value="exp" aria-label="Search ribbon" />
          <button class="clear" title="Clear"><svg class="ic-s"><use href="#close-b"/></svg></button>
          <button class="more" title="Options"><svg class="caret"><use href="#caret"/></svg></button>
          <div class="results">
            <h2>Most Recently Used (1)</h2>
            <div class="hit">
              <div class="res"><svg class="ic"><use href="#exp-coord"/></svg>Export Coordinates</div>
              <div class="trail">Drawing→Annotate→Terrain Model→Coordinates</div>
              <div class="trail">Geotechnical→3D Modeling→Terrain Model→Coordinates</div>
            </div>
            <h2>Ribbon (17)</h2>
            <div class="res"><svg class="ic"><use href="#explorer"/></svg>Explorer</div>
            <div class="res"><svg class="ic"><use href="#exp-ifc"/></svg>Export to IFC</div>
            <div class="res"><svg class="ic"><use href="#exp-file"/></svg>Export To File</div>
            <div class="res"><svg class="ic"><use href="#exp-xml"/></svg>Export Geometry</div>
            <div class="res"><svg class="ic"><use href="#exp-earth"/></svg>Export Google Earth File</div>
            <div class="res"><svg class="ic"><use href="#imp-exp"/></svg>Import/Export</div>
            <div class="all"><a href="#">Show all results</a></div>
            <h2>Backstage (1)</h2>
            <div class="res"><svg class="ic"><use href="#explorer"/></svg>Explorer Settings</div>
            <div class="foot"><svg class="ic-s" viewBox="0 0 10 10"><path d="M1 1h2v2H1zM1 4h2v2H1zM1 7h2v2H1zM4 4h2v2H4zM4 7h2v2H4zM7 7h2v2H7z" fill="#888"/></svg><a href="#">Show Details</a></div>
          </div>
        </div>
        <button class="fold" title="Collapse ribbon"><svg class="ic"><use href="#up"/></svg></button>
      </nav>

      <section class="ribbon">
        <div class="group primary">
          <div class="tools">
            <button title="Explorer"><svg class="ic"><use href="#explorer"/></svg></button>
            <button title="Models"><svg class="ic"><use href="#page"/></svg><svg class="caret"><use href="#caret"/></svg></button>
            <button title="Properties"><svg class="ic"><use href="#info"/></svg></button>
          </div>
          <h3>Primary</h3>
        </div>
        <div class="group selection">
          <div class="tools">
            <button><svg class="ic"><use href="#cursor"/></svg>Element Selection<svg class="ic box"><use href="#sel-box"/></svg><svg class="caret"><use href="#caret"/></svg></button>
            <button title="Select all"><svg class="ic"><use href="#sel-dots"/></svg></button>
            <button title="Select none"><svg class="ic"><use href="#sel-none"/></svg></button>
          </div>
          <h3>Selection</h3>
        </div>
        <div class="group general">
          <div class="tools">
            <button><svg class="ic"><use href="#imp"/></svg>Import/Export<svg class="caret"><use href="#caret"/></svg></button>
            <button><svg class="ic"><use href="#design"/></svg>Design Elements<svg class="caret"><use href="#caret"/></svg></button>
            <button><svg class="ic"><use href="#std"/></svg>Standards<svg class="caret"><use href="#caret"/></svg></button>
            <button><svg class="ic"><use href="#toggles"/></svg>Civil Toggles<svg class="caret"><use href="#caret"/></svg></button>
            <button><svg class="ic"><use href="#reports"/></svg>Reports<svg class="caret"><use href="#caret"/></svg></button>
          </div>
          <h3>General Tools</h3>
        </div>
        <div class="group horizontal">
          <div class="tools">
            <button><svg class="ic"><use href="#lines"/></svg>Lines<svg class="caret"><use href="#caret"/></svg></button>
            <button><svg class="ic"><use href="#arcs"/></svg>Arcs<svg class="caret"><use href="#caret"/></svg></button>
            <button><svg class="ic"><use href="#point"/></svg>Point<svg class="caret"><use href="#caret"/></svg></button>
            <button><svg class="ic"><use href="#offsets"/></svg>Offsets and Tapers<svg class="caret"><use href="#caret"/></svg></button>
            <button><svg class="ic"><use href="#reverse"/></svg>Reverse Curves<svg class="caret"><use href="#caret"/></svg></button>
            <button><svg class="ic"><use href="#spirals"/></svg>Spirals<svg class="caret"><use href="#caret"/></svg></button>
            <button><svg class="ic"><use href="#modify"/></svg>Modify<svg class="caret"><use href="#caret"/></svg></button>
            <button><svg class="ic"><use href="#complex"/></svg>Complex Geometry<svg class="caret"><use href="#caret"/></svg></button>
          </div>
          <h3>Horizontal</h3>
        </div>
        <div class="group last">
          <div class="tools">
            <button><svg class="ic"><use href="#profile"/></svg>Open Profile</button>
            <button><svg class="ic"><use href="#design"/></svg>Set Active Profile</button>
          </div>
          <h3>Tools</h3>
        </div>
        <div class="tip"><b>Export Coordinates</b><em>Export Coordinates</em></div>
      </section>

      <div class="feature">
        <div class="feature-bar">
          <i class="grip"></i>
          <button title="Feature definition"><svg class="ic lower"><use href="#palette"/></svg><svg class="ic over"><use href="#bulb"/></svg></button>
          <label class="combo feat">
            <select aria-label="Feature definition"><option>No Feature Definition</option></select>
            <span class="drop"><svg class="ic-s" viewBox="0 0 10 10"><path d="M1 3l4 4 4-4" fill="none" stroke="#333"/></svg></span>
          </label>
          <button title="Match feature"><svg class="ic lower"><use href="#palette"/></svg><svg class="ic over"><use href="#palette"/></svg></button>
          <button title="Terrain"><svg class="ic-w"><use href="#strata"/></svg></button>
          <button title="Cross section"><svg class="ic-w"><use href="#section"/></svg></button>
          <button title="Annotate"><svg class="ic-w"><use href="#arc-a"/></svg></button>
          <button title="Chain"><svg class="ic-w"><use href="#chain"/></svg></button>
          <button class="on" title="Persist snaps"><svg class="ic-p"><use href="#poly"/></svg></button>
          <button title="Measure"><svg class="ic-l"><use href="#ruler"/></svg></button>
        </div>
      </div>

      <main class="work">
        <aside class="explorer">
          <div class="pane-head">
            <span>Explorer</span>
            <svg class="caret wide"><use href="#caret"/></svg>
            <svg class="ic-s" viewBox="0 0 10 12"><path d="M3 1h5v6H3zM1 7h8M5 7v5" fill="none" stroke="#000" stroke-width="1.5"/></svg>
            <svg class="ic-s" viewBox="0 0 10 10"><path d="M1 1l8 8M9 1L1 9" stroke="#000" stroke-width="2"/></svg>
          </div>
          <div class="acc">
            <button class="acc-head"><svg class="ic"><use href="#v8"/></svg><span>File</span><svg class="ic"><use href="#down"/></svg></button>
            <button class="acc-head"><svg class="ic"><use href="#gem"/></svg><span>Items</span><svg class="ic"><use href="#down"/></svg></button>
            <button class="acc-head"><svg class="ic"><use href="#db"/></svg><span>Resources</span><svg class="ic"><use href="#down"/></svg></button>
            <div class="acc-open">
              <button class="acc-head"><svg class="ic"><use href="#can"/></svg><span>OpenRoads Model</span><svg class="ic"><use href="#up-s"/></svg></button>
              <div class="acc-body">
                <div class="mini">
                  <svg class="ic"><use href="#refresh"/></svg>
                  <i class="sep"></i>
                  <svg class="ic"><use href="#globe-box"/></svg>
                  <svg class="ic"><use href="#zoom-in"/></svg>
                  <svg class="ic"><use href="#squares"/></svg>
                  <i class="sep"></i>
                </div>
                <div class="find">
                  <label><input type="text" placeholder="Search" aria-label="Search model" /><svg class="ic"><use href="#find"/></svg></label>
                  <svg class="ic"><use href="#find-eq"/></svg>
                  <svg class="ic"><use href="#chevs"/></svg>
                </div>
                <div class="treebox">
                  <ul class="tree">
                    <li><div><svg class="ic"><use href="#tw-open"/></svg><svg class="ic"><use href="#zed"/></svg>test.dgn (Default)</div>
                      <ul>
                        <li><div><i></i><svg class="ic"><use href="#complex"/></svg>Alignments</div></li>
                        <li><div><svg class="ic"><use href="#tw-open"/></svg><svg class="ic"><use href="#terrain"/></svg>Terrain Models</div>
                          <ul class="cjk">
                            <li><div><svg class="ic"><use href="#tw"/></svg><svg class="ic"><use href="#diamond"/></svg>等高线</div></li>
                            <li><div><svg class="ic"><use href="#tw"/></svg><svg class="ic"><use href="#diamond"/></svg>等高线及三角网</div></li>
                            <li><div><i></i><svg class="ic"><use href="#diamond"/></svg>三角网</div></li>
                          </ul>
                        </li>
                        <li><div><i></i><svg class="ic"><use href="#corridor"/></svg>Corridors</div></li>
                      </ul>
                    </li>
                  </ul>
                  <div class="scroll">
                    <svg class="caret wide flip"><use href="#caret"/></svg>
                    <i class="thumb"></i>
                    <svg class="caret wide"><use href="#caret"/></svg>
                  </div>
                </div>
              </div>
            </div>
            <button class="acc-head"><svg class="ic"><use href="#sheets"/></svg><span>Sheet Index</span><svg class="ic"><use href="#down"/></svg></button>
            <button class="acc-head"><svg class="ic"><use href="#links"/></svg><span>Links</span><svg class="ic"><use href="#down"/></svg></button>
            <button class="acc-head"><svg class="ic"><use href="#can"/></svg><span>OpenRoads Standards</span><svg class="ic"><use href="#down"/></svg></button>
            <button class="acc-head"><svg class="ic"><use href="#can"/></svg><span>Drainage and Utilities Model</span><svg class="ic"><use href="#down"/></svg></button>
            <button class="acc-head"><svg class="ic"><use href="#can"/></svg><span>Survey</span><svg class="ic"><use href="#down"/></svg></button>
          </div>
        </aside>

        <section class="view">
          <div class="view-title">
            <svg class="ic"><use href="#v-cube"/></svg>
            <span>View 1 - Top, Default</span>
            <button title="Minimize view"><svg class="ic-s" viewBox="0 0 10 10"><path d="M.5 4.5h9v3h-9z" fill="#fff" stroke="#555"/></svg></button>
            <button title="Restore view"><svg class="ic-s" viewBox="0 0 10 10"><path d="M3.5.5h6v6h-3v3h-6v-6h3zM3.5 3.5h3v3M2.5 6.5h2v1h-2z" fill="#fff" stroke="#445"/></svg></button>
            <button class="x" title="Close view"><svg class="ic-s" viewBox="0 0 10 10"><path d="M1 1l8 8M9 1L1 9" stroke="#fff" stroke-width="2.5"/></svg></button>
          </div>
          <div class="view-tools">
            <button title="View attributes"><svg class="ic"><use href="#v-info"/></svg></button>
            <button class="thin" title="More"><svg class="caret wide"><use href="#caret"/></svg></button>
            <button title="Display style"><svg class="ic"><use href="#style"/></svg></button>
            <button title="Brightness"><svg class="ic"><use href="#sun"/></svg></button>
            <button class="thin" title="More"><svg class="caret wide"><use href="#caret"/></svg></button>
            <i class="sep"></i>
            <button title="Update"><svg class="ic"><use href="#brush"/></svg></button>
            <button title="Zoom in"><svg class="ic"><use href="#zoom-in"/></svg></button>
            <button title="Zoom out"><svg class="ic"><use href="#zoom-out"/></svg></button>
            <button title="Window area"><svg class="ic"><use href="#zoom-win"/></svg></button>
            <button class="on" title="Fit view"><svg class="ic"><use href="#fit"/></svg></button>
            <button title="Rotate view"><svg class="ic"><use href="#rotate"/></svg></button>
            <button title="Pan"><svg class="ic"><use href="#hand"/></svg></button>
            <i class="sep"></i>
            <button title="Walk"><svg class="ic"><use href="#feet"/></svg></button>
            <button title="Fly"><svg class="ic"><use href="#plane"/></svg></button>
            <button title="Navigate"><svg class="ic"><use href="#cam"/></svg></button>
            <button title="Previous"><svg class="ic"><use href="#prev"/></svg></button>
            <button title="Next"><svg class="ic"><use href="#next"/></svg></button>
            <i class="sep"></i>
            <button title="Copy view"><svg class="ic"><use href="#wins"/></svg></button>
            <button title="Perspective"><svg class="ic"><use href="#persp"/></svg></button>
            <button title="Clip volume"><svg class="ic"><use href="#clip"/></svg></button>
            <button title="Clip mask"><svg class="ic"><use href="#clip-m"/></svg></button>
          </div>
          <div class="canvas">
            <!-- spot elevations, drawing units are view pixels -->
            <svg>
              <use href="#pt" x="454" y="8" width="6" height="6"/>
              <use href="#pt" x="635" y="17" width="6" height="6"/>
              <use href="#pt" x="457" y="44" width="6" height="6"/>
              <use href="#pt" x="367" y="55" width="6" height="6"/>
              <use href="#pt" x="388" y="84" width="6" height="6"/>
              <use href="#pt" x="309" y="90" width="6" height="6"/>
              <use href="#pt" x="295" y="153" width="6" height="6"/>
              <use href="#pt" x="419" y="151" width="6" height="6"/>
              <use href="#pt" x="457" y="165" width="6" height="6"/>
              <use href="#pt" x="667" y="155" width="6" height="6"/>
              <use href="#pt" x="519" y="193" width="6" height="6"/>
              <use href="#pt" x="351" y="205" width="6" height="6"/>
              <use href="#pt" x="517" y="274" width="6" height="6"/>
              <use href="#pt" x="343" y="294" width="6" height="6"/>
              <use href="#pt" x="599" y="313" width="6" height="6"/>
              <use href="#pt" x="421" y="341" width="6" height="6"/>
              <use href="#pt" x="637" y="436" width="6" height="6"/>
            </svg>
          </div>
        </section>

        <aside class="levels">
          <div class="pane-head"></div>
          <div class="level-filter"></div>
          <div class="level-list">
            <table>
              <thead><tr><th></th><th></th></tr></thead>
              <tbody>
                <tr><td>Default</td><td>●</td></tr>
                <tr><td>E_Terrain_Void</td><td>●</td></tr>
                <tr><td>E_Terrain_Triangle_Vertices</td><td>●</td></tr>
                <tr><td>E_Terrain_Triangle</td><td>●</td></tr>
                <tr class="sel"><td>E_Terrain_SpotElevation</td><td>●</td></tr>
                <tr><td>E_Terrain_Points_Low</td><td>●</td></tr>
                <tr><td>E_Terrain_Points_High</td><td>●</td></tr>
                <tr><td>E_Terrain_Island</td><td>●</td></tr>
                <tr><td>E_Terrain_Hole</td><td>●</td></tr>
                <tr><td>E_Terrain_Flow_Arrows</td><td>●</td></tr>
                <tr><td>E_Terrain_Exterior</td><td>●</td></tr>
                <tr><td>E_Terrain_Contours</td><td>●</td></tr>
              </tbody>
            </table>
            <div class="gutter"></div>
          </div>
        </aside>
        <button class="refs"><svg class="ic"><use href="#page"/></svg>References (0 of 0 unique, 0 displayed)</button>
      </main>

      <div class="bottom">
        <div class="bar nav">
          <i class="grip"></i>
          <button title="Back"><svg class="ic-l"><use href="#back"/></svg></button>
          <button class="dd" title="Back list"><svg class="caret"><use href="#caret"/></svg></button>
          <button title="Forward"><svg class="ic-l"><use href="#fwd"/></svg></button>
          <button class="dd off" title="Forward list"><svg class="caret"><use href="#caret"/></svg></button>
          <button title="Models"><svg class="ic-l"><use href="#disc"/></svg></button>
          <button class="dd" title="Model list"><svg class="caret"><use href="#caret"/></svg></button>
          <label class="combo group-sel">
            <svg class="ic"><use href="#view-grp"/></svg>
            <select aria-label="View group"><option>Default</option></select>
            <svg class="caret"><use href="#caret"/></svg>
          </label>
          <i class="sep"></i>
          <button title="View groups"><svg class="ic-l"><use href="#view-grp"/></svg></button>
          <i class="sep"></i>
          <div class="nums">
            <button class="on">1</button><button>2</button><button>3</button><button>4</button><button>5</button><button>6</button><button>7</button><button>8</button>
          </div>
        </div>
        <div class="bar snaps">
          <i class="grip"></i>
          <button class="on" title="AccuSnap"><svg class="ic-l"><use href="#cross-y"/></svg></button>
          <i class="sep"></i>
          <button class="gap" title="Nearest"><svg class="ic-n"><use href="#sn-near"/></svg></button>
          <button class="on mesh" title="Keypoint"><svg class="ic-n"><use href="#poly"/></svg></button>
          <button title="Midpoint"><svg class="ic-l"><use href="#sn-mid"/></svg></button>
          <button title="Center"><svg class="ic-l"><use href="#sn-cen"/></svg></button>
          <button title="Origin"><svg class="ic-l"><use href="#sn-org"/></svg></button>
          <button title="Bisector"><svg class="ic-n"><use href="#sn-bi"/></svg></button>
          <button title="Intersection"><svg class="ic-n"><use href="#sn-int"/></svg></button>
          <button title="Tangent"><svg class="ic-l"><use href="#sn-tan"/></svg></button>
          <button title="Perpendicular"><svg class="ic-l"><use href="#sn-perp"/></svg></button>
          <i class="sep"></i>
          <button title="Multi-snap"><svg class="ic-l"><use href="#sn-multi"/></svg></button>
        </div>
        <div class="bar coords">
          <i class="grip"></i>
          <label for="cx">X</label><input id="cx" type="text" value="365142.549" />
          <i class="sep"></i>
          <label for="cy">Y</label><input id="cy" type="text" value="3253195.275" />
          <i class="sep"></i>
          <label for="cz">Z</label><input id="cz" type="text" value="319.372" />
        </div>
      </div>

      <footer class="status">
        <div class="msg">Fit View &gt; Select view to fit</div>
        <i class="grip"></i>
        <div class="tick line"><svg class="caret flip"><use href="#caret"/></svg></div>
        <div class="ent">Point Entity 3d: Pt4 \</div>
        <div class="snap line"><svg class="ic-h"><use href="#poly"/></svg></div>
        <div class="cell"><svg class="ic"><use href="#lock"/></svg></div>
        <div class="lvl">E_Terrain_SpotElevation</div>
        <div class="spare line"></div>
        <div class="xyz line">365142.611, 3253194.904, 319.372</div>
        <div class="cell line"></div>
        <div class="cell"></div>
        <div class="cell"></div>
        <div class="cell line"><svg class="ic"><use href="#scroll"/></svg></div>
        <div class="cell"></div>
        <div class="cell"></div>
        <div class="cell"><svg class="ic"><use href="#book"/></svg></div>
        <div class="cell"></div>
        <div class="cell"><svg class="ic"><use href="#prism"/></svg></div>
        <div class="cell"><svg class="ic"><use href="#net"/></svg></div>
      </footer>
    </div>
  </body>
</html>
```
FILE: styles.css
```css
* {
  box-sizing: border-box;
}
body {
  margin: 0;
  font-family: "Open Sans", "Noto Sans CJK SC", sans-serif;
  font-size: 11px;
  line-height: 16px;
  color: #1c1c1c;
  background: #efeff1;
}
button {
  font: inherit;
  color: inherit;
  background: none;
  border: 0;
  padding: 0;
  margin: 0;
  display: flex;
  align-items: center;
  justify-content: center;
  white-space: nowrap;
}
h2,
h3 {
  margin: 0;
  font-size: 11px;
  font-weight: normal;
}
svg {
  display: block;
  flex: none;
}
select,
input {
  font: inherit;
  color: inherit;
  margin: 0;
  min-width: 0;
  border: 0;
  outline: none;
  border-radius: 0;
}
.sprite {
  position: absolute;
  width: 0;
  height: 0;
}
.ic {
  width: 16px;
  height: 16px;
}
.ic-s {
  width: 10px;
  height: 10px;
}
.ic-p {
  width: 18px;
  height: 18px;
}
.ic-n {
  width: 22px;
  height: 22px;
}
.ic-l {
  width: 24px;
  height: 24px;
}
.ic-w {
  width: 24px;
  height: 20px;
}
.ic-h {
  width: 32px;
  height: 28px;
}
.caret {
  width: 7px;
  height: 4px;
  color: #777;
}
.caret.wide {
  width: 9px;
  height: 5px;
  color: #111;
}
.flip {
  transform: rotate(180deg);
}
.sep {
  width: 1px;
  align-self: stretch;
  margin: 2px 4px;
  background: #a8a8a8;
  flex: none;
}
.grip {
  width: 3px;
  height: 18px;
  flex: none;
  background: repeating-linear-gradient(#a6a6a6 0 2px, transparent 2px 4px);
}

.app {
  min-height: 100vh;
  min-width: 1280px;
  border: 1px solid #0078d0;
  display: flex;
  flex-direction: column;
  position: relative;
  overflow: hidden;
}

/* title bar */
.titlebar {
  height: 27px;
  display: flex;
  align-items: center;
  padding-left: 4px;
}
.logo {
  margin-right: 7px;
}
.combo {
  display: flex;
  align-items: center;
  position: relative;
  background: #fff;
  border: 1px solid #c8c8d4;
}
.combo select {
  appearance: none;
  background: none;
  flex: 1;
  padding: 0 4px;
}
.combo .caret {
  position: absolute;
  right: 4px;
  pointer-events: none;
}
.workflow {
  width: 159px;
  height: 21px;
  font-size: 12px;
  margin-right: 3px;
}
.quick {
  display: flex;
}
.quick button {
  width: 22px;
  height: 22px;
}
.quick .thin {
  width: 13px;
}
.quick .on {
  background: #cbe0f5;
  border: 1px solid #b4cbe6;
}
.winctl {
  margin-left: auto;
  display: flex;
  color: #777;
}
.winctl button {
  margin-right: 6px;
}
.winctl button:last-child {
  margin-right: 4px;
}
.winctl .help {
  width: 10px;
  font-size: 13px;
  font-weight: bold;
}

/* ribbon tabs */
.tabs {
  height: 25px;
  display: flex;
  border-bottom: 1px solid #c8c8dc;
  margin-right: 3px;
}
.tabs > button {
  height: 23px;
  padding: 0 14px;
  border: 1px solid transparent;
  border-bottom: 0;
}
.tabs > .file {
  width: 46px;
  height: 24px;
  padding: 0 0 1px;
  border: 0;
  background: #0078d0;
  color: #fff;
}
.tabs > .active {
  height: 25px;
  padding: 0 13px 2px;
  background: #fafafc;
  border-color: #c8c8dc;
}
.tabs > .fold {
  width: 22px;
  padding: 0;
  color: #555;
}
.search {
  position: relative;
  margin-left: auto;
  margin-top: 1px;
  width: 193px;
  height: 22px;
  display: flex;
  background: #fff;
  border: 1px solid #a8a8a8;
  border-bottom: 0;
}
.search input {
  flex: 1;
  background: none;
  padding: 0 4px 2px;
}
.search .clear {
  width: 20px;
  color: #2b6cb0;
}
.search .more {
  width: 16px;
}
.results {
  position: absolute;
  z-index: 10;
  top: 20px;
  right: -1px;
  width: 400px;
  padding: 2px 1px 0;
  background: #fff;
  border: 1px solid #a8a8a8;
}
.results h2 {
  display: flex;
  align-items: center;
  height: 24px;
  padding-left: 5px;
  color: #0a44c4;
}
.results h2::after {
  content: "";
  flex: 1;
  height: 1px;
  margin: 0 5px;
  background: #cfcfcf;
}
.res {
  display: flex;
  align-items: center;
  gap: 4px;
  height: 24px;
  padding-left: 14px;
}
.hit {
  background: #3399ff;
  height: 62px;
  margin-bottom: 1px;
}
.hit .res {
  color: #fff;
}
.trail {
  height: 19px;
  line-height: 12px;
  padding-left: 36px;
  color: #000;
}
.results a {
  color: #0a44c4;
}
.all {
  height: 29px;
  padding: 5px 0 0 35px;
}
.foot {
  display: flex;
  align-items: center;
  justify-content: space-between;
  height: 20px;
  margin-top: 44px;
  padding: 0 4px 0 0;
  border-top: 1px solid #c8c8dc;
}

/* ribbon */
.ribbon {
  height: 95px;
  display: flex;
  position: relative;
  background: #fafafc;
  border-bottom: 1px solid #c8c8dc;
  margin-right: 3px;
}
.group {
  display: flex;
  flex-direction: column;
  justify-content: space-between;
  border-right: 1px solid #c8c8dc;
  margin: 1px 0 0;
  padding: 6px 0 0 7px;
}
.group h3 {
  text-align: center;
  margin-left: -7px;
}
.tools {
  display: grid;
  grid-template-rows: repeat(3, 22px);
  grid-auto-flow: column;
}
.tools button {
  justify-content: flex-start;
  gap: 5px;
}
.tools .caret {
  margin-left: 3px;
}
.tools .box {
  margin-left: 5px;
}
.primary {
  width: 53px;
  padding-left: 13px;
}
.primary h3 {
  margin-left: -11px;
}
.selection {
  width: 165px;
}
.selection .tools button {
  gap: 4px;
}
.general {
  width: 246px;
}
.general .tools {
  grid-template-columns: 129px 1fr;
}
.horizontal {
  width: 364px;
  padding-left: 9px;
}
.horizontal .tools {
  grid-template-columns: 70px 138px 1fr;
}
.last {
  flex: 1;
  margin-right: 6px;
}
.last .tools button {
  gap: 4px;
}
.last h3 {
  text-align: right;
  padding-right: 4px;
}
.tip {
  position: absolute;
  z-index: 11;
  left: 818px;
  top: 40px;
  padding: 3px;
  display: flex;
  flex-direction: column;
  align-items: flex-end;
  line-height: 15px;
  background: #f7f7fa;
  border: 1px solid #c8c8d4;
}

/* feature toolbar */
.feature {
  height: 31px;
  display: flex;
  background: #d5d5d5;
}
.feature-bar {
  width: 506px;
  display: flex;
  align-items: center;
  padding: 0 0 2px 3px;
  background: linear-gradient(#fcfcfc, #dcdcdc);
}
.feature-bar button {
  position: relative;
  width: 28px;
  height: 28px;
}
.feature-bar .on {
  background: #82b7e6;
  border: 1px solid #14288c;
}
.feature-bar .lower {
  width: 11px;
  height: 11px;
  position: absolute;
  left: 4px;
  bottom: 3px;
}
.feature-bar .over {
  width: 12px;
  height: 15px;
  position: absolute;
  right: 2px;
  top: 2px;
}
.feat {
  width: 273px;
  height: 21px;
  margin-left: 2px;
  background: #f0f0f0;
  border-color: #ddd #ddd #888;
}
.feat select {
  font-family: "Liberation Mono", monospace;
  font-size: 10px;
  color: #000;
  padding: 0 1px;
}
.drop {
  display: flex;
  align-items: center;
  justify-content: center;
  width: 16px;
  height: 18px;
  background: #fff;
  border: 1px solid #bbb;
}

/* work area */
.work {
  flex: 1;
  display: flex;
  min-height: 400px;
  background: #8e99a4;
}
.explorer {
  width: 245px;
  display: flex;
  flex-direction: column;
  background: #efeff1;
  font-family: "DejaVu Sans", sans-serif;
}
.pane-head {
  height: 19px;
  display: flex;
  align-items: center;
  gap: 7px;
  padding: 0 5px 0 3px;
  background: #bfbfbf;
}
.pane-head span {
  flex: 1;
}
.acc {
  flex: 1;
  display: flex;
  flex-direction: column;
  gap: 4px;
  padding: 4px 3px 7px;
}
.acc-head {
  height: 24px;
  padding: 0 5px 0 4px;
  gap: 6px;
  border: 1px solid #a9abb0;
  border-radius: 4px;
  background: #edeef2;
}
.acc-head span {
  flex: 1;
  text-align: left;
}
.acc-open {
  flex: 1;
  display: flex;
  flex-direction: column;
  background: #fff;
  border: 1px solid #c6dcf6;
  border-radius: 4px;
}
.acc-open .acc-head {
  height: 22px;
  border: 0;
  border-radius: 3px 3px 0 0;
  background: #cce0f8;
  font-weight: bold;
}
.acc-body {
  flex: 1;
  display: flex;
  flex-direction: column;
  padding: 3px 5px;
}
.mini {
  height: 24px;
  display: flex;
  align-items: center;
  gap: 7px;
  padding-left: 6px;
  background: linear-gradient(90deg, #f0f0f0, #fff);
}
.mini .sep {
  margin: 1px -4px 1px 0;
}
.find {
  display: flex;
  align-items: center;
  gap: 1px;
  margin: 3px 0;
}
.find label {
  display: flex;
  align-items: center;
  width: 191px;
  height: 19px;
  border: 1px solid #777;
  padding-right: 1px;
}
.find input {
  flex: 1;
  padding: 0 2px;
  font: italic 11px "Liberation Mono", monospace;
}
.treebox {
  flex: 1 1 0;
  min-height: 0;
  overflow: hidden;
  display: flex;
  justify-content: space-between;
  border: 1px solid #666;
  width: 227px;
  font-family: "Open Sans", "Noto Sans CJK SC", sans-serif;
}
.tree,
.tree ul {
  list-style: none;
  margin: 0;
  padding: 0;
}
.tree {
  height: 0;
  padding: 3px 0 0 4px;
}
.tree ul {
  padding-left: 20px;
}
.tree div {
  display: flex;
  align-items: center;
  gap: 5px;
  height: 24px;
}
.tree .cjk {
  font-size: 12px;
}
.tree div i {
  width: 16px;
}
.scroll {
  width: 17px;
  display: flex;
  flex-direction: column;
  align-items: center;
  padding: 6px 0 5px;
  background: #f0f0f0;
}
.scroll .wide {
  color: #777;
}
.thumb {
  width: 9px;
  height: 46px;
  margin: 6px 0 auto;
  background: #c9cbd8;
}

/* view window */
.view {
  flex: 1;
  min-width: 0;
  margin: 0 6px 0 5px;
  display: flex;
  flex-direction: column;
}
.view-title {
  height: 31px;
  display: flex;
  align-items: center;
  gap: 3px;
  padding: 6px 3px 0 1px;
  border-top: 1px solid #444;
  background: linear-gradient(#95afce, #b9d0ea);
}
.view-title span {
  flex: 1;
  margin-left: 6px;
  font-size: 13px;
}
.view-title button {
  width: 31px;
  height: 17px;
  border: 1px solid #5a6b80;
  border-radius: 2px;
  background: #b4c9e0;
}
.view-title .x {
  background: #c4483c;
}
.view-tools {
  height: 24px;
  display: flex;
  align-items: center;
  background: #efeff0;
  padding-left: 1px;
}
.view-tools button {
  width: 22px;
  height: 22px;
}
.view-tools .thin {
  width: 15px;
}
.view-tools .sep {
  margin: 2px 3px 2px 2px;
}
.view-tools .on {
  background: #a4cdf0;
  border: 1px solid #3a78c4;
}
.canvas {
  flex: 1;
  background: #000;
}
.canvas svg {
  width: 100%;
  height: 100%;
}

/* level list */
.levels {
  width: 375px;
  display: flex;
  flex-direction: column;
  background: #f0f0f0;
}
.level-filter {
  flex: none;
  height: 151px;
  margin-top: 72px;
  border: 1px solid #8a8a94;
}
.level-list {
  flex: 1 1 0;
  min-height: 0;
  overflow: hidden;
  display: flex;
  margin: 8px 0 1px;
  border: 1px solid #8a8a94;
  padding-left: 3px;
  background: #fff;
}
.level-list table {
  flex: 1;
  height: 0;
  border-collapse: collapse;
  font-size: 12px;
  font-weight: bold;
  color: #0a78d6;
}
.level-list th {
  height: 28px;
  border-right: 1px solid #ddd;
}
.level-list td {
  height: 19px;
  padding: 0 4px;
  line-height: 18px;
}
.level-list td:last-child {
  width: 125px;
  text-align: center;
  color: #000;
  font-family: "DejaVu Sans", sans-serif;
  font-size: 8px;
}
.level-list .sel td,
.level-list .sel td:last-child {
  background: #008080;
  color: #fff;
}
.gutter {
  width: 16px;
  margin-left: 2px;
  background: #f0f0f0;
}
.refs {
  align-self: flex-start;
  writing-mode: vertical-rl;
  justify-content: flex-start;
  gap: 4px;
  width: 19px;
  height: 262px;
  margin: 5px 0 0 3px;
  padding-top: 4px;
  background: #cdced3;
  border: 1px solid #333;
  border-right: 0;
  font-family: "DejaVu Sans", sans-serif;
}

/* bottom toolbars */
.bottom {
  height: 34px;
  display: flex;
  background: #d5d5d5;
}
.bar {
  display: flex;
  align-items: center;
  background: #f0f0f1;
  padding-left: 2px;
}
.bar .sep {
  margin: 3px;
}
.nav {
  width: 495px;
}
.nav > button {
  width: 26px;
  height: 28px;
  margin-left: 4px;
}
.nav > .dd {
  width: 10px;
  margin: 0 0 0 3px;
}
.nav .caret {
  color: #000;
}
.nav .off .caret {
  color: #777;
}
.nav > .sep + button {
  margin: 0;
}
.group-sel {
  width: 168px;
  height: 23px;
  margin-left: 4px;
  font-size: 12px;
  border-radius: 3px;
  padding-left: 2px;
}
.nums {
  display: flex;
  font-size: 12px;
}
.nums button {
  width: 18px;
  height: 23px;
  border: 1px solid #ccc;
  border-left-color: #fff;
  border-right: 1px solid #222;
}
.nums .on {
  background: #82b5e2;
  border: 1px solid #2e6fbe;
}
.snaps {
  width: 331px;
  margin-left: 2px;
  padding-left: 3px;
}
.snaps button {
  width: 28px;
  height: 28px;
}
.snaps .on {
  margin-left: 2px;
  background: #7fb4e2;
  border: 1px solid #2e6fbe;
}
.snaps .gap {
  margin-left: 1px;
}
.snaps .sep {
  margin: 3px 2px;
}
.snaps .mesh {
  margin: 0;
  background: repeating-conic-gradient(#3c5f80 0 25%, #8cc0ea 0 50%) 0 0 / 4px 4px;
}
.coords {
  margin-left: 3px;
  padding: 0 1px;
}
.coords label {
  width: 22px;
  text-align: center;
  font-size: 17px;
  font-weight: bold;
  color: #000;
}
.coords input {
  width: 120px;
  height: 21px;
  padding: 0 5px;
  border: 1px solid #a8a8b4;
  background: #fff;
  font-size: 12px;
  color: #777;
}

/* status bar */
.status {
  height: 31px;
  display: flex;
  align-items: center;
  margin-top: 1px;
  padding-right: 5px;
  font-size: 12px;
  color: #000;
}
.status > div {
  height: 27px;
  display: flex;
  align-items: center;
}
.status > .line {
  border-left: 1px solid #555;
}
.msg {
  width: 255px;
  padding-left: 3px;
}
.tick {
  width: 34px;
  margin-left: 2px;
}
.tick .caret {
  align-self: flex-start;
  margin-left: auto;
  color: #111;
}
.ent {
  width: 136px;
  padding-left: 2px;
  border-left: 1px solid #555;
}
.snap {
  width: 34px;
}
.cell {
  width: 34px;
  justify-content: center;
  border-left: 1px solid #ddd;
}
.lvl {
  width: 149px;
  padding-left: 3px;
  border-left: 1px solid #ddd;
}
.spare {
  width: 133px;
}
.xyz {
  flex: 1;
  padding-left: 4px;
}
```
